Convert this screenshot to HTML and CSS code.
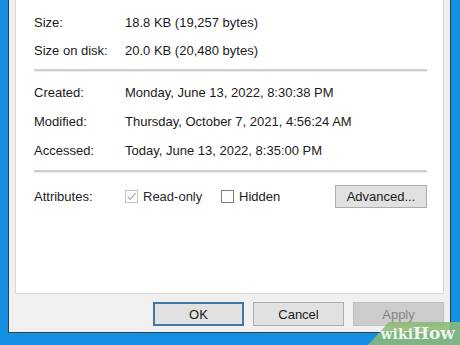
FILE: index.html
```html
<!DOCTYPE html>
<html>
<head>
<meta name="viewport" content="width=device-width, initial-scale=1">
<link rel="stylesheet" href="styles.css">
</head>
<body>

<div class="dialog">

  <div class="panel">
    <div class="row"><span class="label">Size:</span><span>18.8 KB (19,257 bytes)</span></div>
    <div class="row"><span class="label">Size on disk:</span><span>20.0 KB (20,480 bytes)</span></div>

    <div class="sep"></div>

    <div class="row tall"><span class="label">Created:</span><span>Monday, June 13, 2022, 8:30:38 PM</span></div>
    <div class="row tall"><span class="label">Modified:</span><span>Thursday, October 7, 2021, 4:56:24 AM</span></div>
    <div class="row tall"><span class="label">Accessed:</span><span>Today, June 13, 2022, 8:35:00 PM</span></div>

    <div class="sep"></div>

    <div class="row attrs">
      <span class="label">Attributes:</span>
      <span class="check checked">
        <span class="box"><svg width="11" height="11" viewBox="0 0 11 11"><path d="M1.5 5.5 L4.2 8.4 L9.6 2.2" fill="none" stroke="#a9a9a9" stroke-width="1.1"/></svg></span>
        Read-only
      </span>
      <span class="check hidden-box">
        <span class="box"></span>
        Hidden
      </span>
      <button class="btn advanced">Advanced...</button>
    </div>
  </div>

  <div class="footer">
    <button class="btn default">OK</button>
    <button class="btn">Cancel</button>
    <button class="btn disabled">Apply</button>
  </div>

</div>

<!-- watermark over the corner -->
<div class="mark"><span class="wiki">wiki</span>How</div>

</body>
</html>
```

FILE: styles.css
```css
body {
  margin: 0;
  width: 460px;
  height: 345px;
  overflow: hidden;
  background-color: #1590e3;
  font-family: "Liberation Sans", Arial, sans-serif;
  font-size: 13px;
  color: #1b1b1b;
  position: relative;
}

/* The dialog window */
.dialog {
  margin-left: 8px;
  width: 443px;
  height: 333px;
  background-color: #f0f0f0;
  border: 1px solid #2a3f55;
  border-top: none;
  padding: 0 6px 0 6px;
  box-sizing: border-box;
  display: flex;
  flex-direction: column;
}

/* White tab page */
.panel {
  background-color: #fff;
  border: 1px solid #d9d9d9;
  border-top: none;
  height: 294px;
  box-sizing: border-box;
  padding: 8px 16px 0 18px;
}

.row {
  display: flex;
  align-items: center;
  height: 28px;
}

.row.tall {
  height: 29px;
}

.label {
  width: 91px;
  flex: none;
}

.sep {
  height: 2px;
  background-color: #cfcfcf;
  margin: 5px 0 6px 0;
  border-bottom: 1px solid #ececec;
}

.attrs {
  height: 34px;
  margin-top: 2px;
}

.check {
  display: flex;
  align-items: center;
  gap: 5px;
}

.checked {
  width: 96px;
  color: #2a2a2a;
}

.box {
  width: 13px;
  height: 13px;
  border: 1px solid #b3b3b3;
  box-sizing: border-box;
  display: flex;
  align-items: center;
  justify-content: center;
  background: #fff;
}

.checked .box {
  border-color: #c4c4c4;
}

.hidden-box .box {
  border-color: #7d7d7d;
}

/* Buttons */
.btn {
  font-family: "Liberation Sans", Arial, sans-serif;
  font-size: 13px;
  color: #1b1b1b;
  background-color: #e1e1e1;
  border: 1px solid #adadad;
  width: 91px;
  height: 24px;
  padding: 0;
}

.advanced {
  margin-left: auto;
  width: 92px;
  height: 23px;
}

.footer {
  display: flex;
  justify-content: flex-end;
  gap: 9px;
  padding-top: 8px;
  padding-right: 0;
}

.default {
  border: 2px solid #3f78a8;
}

.disabled {
  background-color: #cccccc;
  border-color: #bfbfbf;
  color: #848484;
}

/* wikiHow corner badge */
.mark {
  position: absolute;
  right: 0;
  bottom: 0;
  width: 92px;
  height: 23px;
  background-color: rgba(140, 186, 118, 0.88);
  clip-path: polygon(21px 0, 100% 0, 100% 100%, 0 100%);
  color: rgba(255, 255, 255, 0.88);
  font-family: "DejaVu Serif", "Liberation Serif", serif;
  font-weight: bold;
  font-size: 17px;
  line-height: 23px;
  text-align: right;
  padding-right: 5px;
  box-sizing: border-box;
}

.wiki {
  font-size: 14px;
}
```
